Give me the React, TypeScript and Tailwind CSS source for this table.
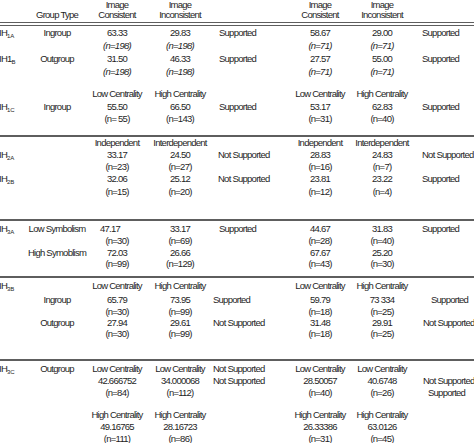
import React from "react";

type RowProps = {
  h: string;
  mt?: string;
  italic?: boolean;
  lab?: React.ReactNode;
  grp?: string;
  c1?: string;
  i1?: string;
  s1?: string;
  c2?: string;
  i2?: string;
  s2?: string;
  c1cls?: string;
  s1cls?: string;
  s2cls?: string;
};

const Lab = ({ main, sub }: { main: string; sub: string }) => (
  <span className="whitespace-nowrap">
    {main}
    <span className="relative top-[2px] text-[6px] tracking-[-0.2px]">{sub}</span>
  </span>
);

function Row({ h, mt = "", italic, lab, grp, c1, i1, s1, c2, i2, s2, c1cls = "justify-center", s1cls = "pl-[7px]", s2cls = "pl-[9px]" }: RowProps) {
  const it = italic ? "italic" : "";
  return (
    <div className={`grid grid-cols-[28px_58px_62px_64px_56px_21px_62px_62px_61px] items-center ${h} ${mt}`}>
      <div className="flex items-center justify-start whitespace-nowrap -ml-[1px]">{lab}</div>
      <div className="flex items-center justify-center whitespace-nowrap">{grp}</div>
      <div className={`flex items-center whitespace-nowrap ${c1cls} ${it}`}>{c1}</div>
      <div className={`flex items-center justify-center whitespace-nowrap ${it}`}>{i1}</div>
      <div className={`flex items-center justify-start whitespace-nowrap ${s1cls}`}>{s1}</div>
      <div />
      <div className={`flex items-center justify-center whitespace-nowrap ${it}`}>{c2}</div>
      <div className={`flex items-center justify-center whitespace-nowrap ${it}`}>{i2}</div>
      <div className={`flex items-center justify-start whitespace-nowrap ${s2cls}`}>{s2}</div>
    </div>
  );
}

const Line = ({ mt }: { mt: string }) => <div className={`h-[2px] w-full bg-[#5e5e5e] ${mt}`} />;

export default function App() {
  return (
    <div
      className="w-[474px] h-[443px] overflow-hidden bg-white text-[#1e1e1e] text-[9.5px] tracking-[-0.75px] leading-none"
      style={{ fontFamily: '"Liberation Sans", Arial, sans-serif' }}
    >
      {/* header */}
      <Row h="h-[9px]" c1="Image" i1="Image" c2="Image" i2="Image" />
      <Row h="h-[12px]" grp="Group Type" c1="Consistent" i1="Inconsistent" c2="Consistent" i2="Inconsistent" />
      <div className="mt-[0.5px] h-[1.5px] w-full bg-[#5e5e5e]" />
      <div className="mt-[1.5px] h-[1.5px] w-full bg-[#5e5e5e]" />

      {/* section 1 */}
      <Row h="h-[13px]" mt="mt-[0.5px]" lab={<Lab main="IH" sub="1A" />} grp="Ingroup" c1="63.33" i1="29.83" s1="Supported" c2="58.67" i2="29.00" s2="Supported" />
      <Row h="h-[13px]" italic c1="(n=198)" i1="(n=198)" c2="(n=71)" i2="(n=71)" />
      <Row h="h-[13px]" lab={<Lab main="IH1" sub="B" />} grp="Outgroup" c1="31.50" i1="46.33" s1="Supported" c2="27.57" i2="55.00" s2="Supported" />
      <Row h="h-[12px]" italic c1="(n=198)" i1="(n=198)" c2="(n=71)" i2="(n=71)" />
      <Row h="h-[12px]" mt="mt-[10.5px]" c1="Low Centrality" i1="High Centrality" c2="Low Centrality" i2="High Centrality" />
      <Row h="h-[13px]" lab={<Lab main="IH" sub="1C" />} grp="Ingroup" c1="55.50" i1="66.50" s1="Supported" c2="53.17" i2="62.83" s2="Supported" />
      <Row h="h-[12px]" c1="(n= 55)" i1="(n=143)" c2="(n=31)" i2="(n=40)" />
      <Line mt="mt-[10px]" />

      {/* section 2 */}
      <Row h="h-[11px]" c1="Independent" i1="Interdependent" c2="Independent" i2="Interdependent" />
      <Row h="h-[13px]" lab={<Lab main="IH" sub="2A" />} c1="33.17" i1="24.50" s1="Not Supported" s1cls="pl-[6px]" c2="28.83" i2="24.83" s2="Not Supported" />
      <Row h="h-[12px]" c1="(n=23)" i1="(n=27)" c2="(n=16)" i2="(n=7)" />
      <Row h="h-[12px]" lab={<Lab main="IH" sub="2B" />} c1="32.06" i1="25.12" s1="Not Supported" s1cls="pl-[6px]" c2="23.81" i2="23.22" s2="Supported" />
      <Row h="h-[13px]" c1="(n=15)" i1="(n=20)" c2="(n=12)" i2="(n=4)" />
      <Line mt="mt-[21px]" />

      {/* section 3 */}
      <Row h="h-[13px]" mt="mt-[1px]" lab={<Lab main="IH" sub="3A" />} grp="Low Symbolism" c1="47.17" c1cls="justify-start pl-[14px]" i1="33.17" s1="Supported" c2="44.67" i2="31.83" s2="Supported" />
      <Row h="h-[12px]" c1="(n=30)" i1="(n=69)" c2="(n=28)" i2="(n=40)" />
      <Row h="h-[11px]" grp="High Symoblism" c1="72.03" i1="26.66" c2="67.67" i2="25.20" />
      <Row h="h-[12px]" c1="(n=99)" i1="(n=129)" c2="(n=43)" i2="(n=30)" />
      <Line mt="mt-[6px]" />

      {/* section 4 */}
      <Row h="h-[12px]" mt="mt-[2px]" lab={<Lab main="IH" sub="3B" />} c1="Low Centrality" i1="High Centrality" c2="Low Centrality" i2="High Centrality" />
      <Row h="h-[12px]" mt="mt-[2px]" grp="Ingroup" c1="65.79" i1="73.95" s1="Supported" s1cls="pl-[1px]" c2="59.79" i2="73 334" s2="Supported" s2cls="pl-[18px]" />
      <Row h="h-[11px]" c1="(n=30)" i1="(n=99)" c2="(n=18)" i2="(n=25)" />
      <Row h="h-[11px]" grp="Outgroup" c1="27.94" i1="29.61" s1="Not Supported" s1cls="pl-[1px]" c2="31.48" i2="29.91" s2="Not Supported" s2cls="pl-[10px]" />
      <Row h="h-[12px]" c1="(n=30)" i1="(n=99)" c2="(n=18)" i2="(n=25)" />
      <Line mt="mt-[19px]" />

      {/* section 5 */}
      <Row h="h-[12px]" mt="mt-[2px]" lab={<Lab main="IH" sub="3C" />} grp="Outgroup" c1="Low Centrality" i1="Low Centrality" s1="Not Supported" s1cls="pl-[1px]" c2="Low Centrality" i2="Low Centrality" />
      <Row h="h-[12px]" c1="42.666752" i1="34.000068" s1="Not Supported" s1cls="pl-[1px]" c2="28.50057" i2="40.6748" s2="Not Supported" s2cls="pl-[10px]" />
      <Row h="h-[12px]" c1="(n=84)" i1="(n=112)" c2="(n=40)" i2="(n=26)" s2="Supported" s2cls="pl-[15px]" />
      <Row h="h-[12px]" mt="mt-[10px]" c1="High Centrality" i1="High Centrality" c2="High Centrality" i2="High Centrality" />
      <Row h="h-[12px]" c1="49.16765" i1="28.16723" c2="26.33386" i2="63.0126" />
      <Row h="h-[11px]" c1="(n=111)" i1="(n=86)" c2="(n=31)" i2="(n=45)" />
    </div>
  );
}
